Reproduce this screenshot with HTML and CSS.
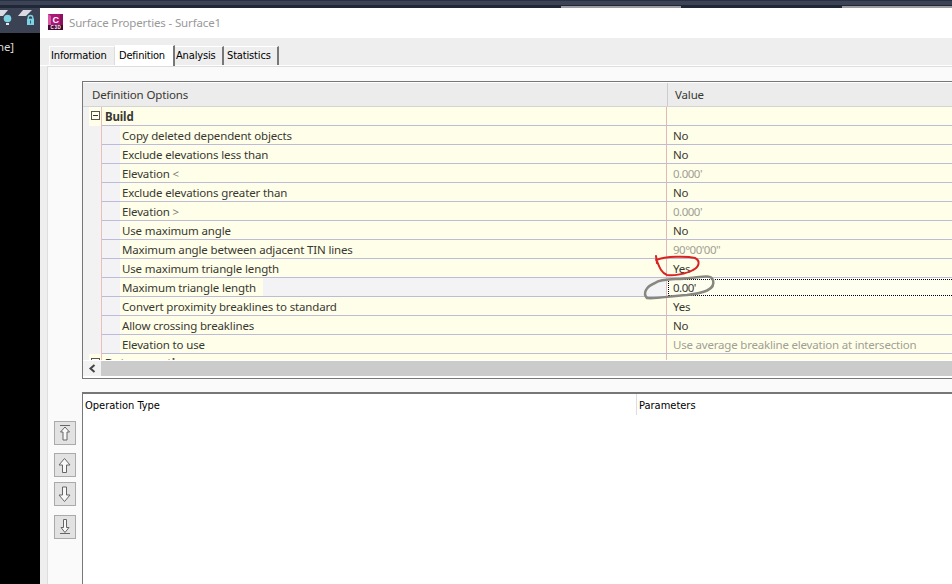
FILE: index.html
```html
<!DOCTYPE html>
<html lang="en">
<head>
    <meta charset="UTF-8">
    <meta name="viewport" content="width=device-width, initial-scale=1.0">
    <title>Surface Properties - Surface1</title>
    <link rel="stylesheet" href="styles.css">
</head>
<body>
    <div class="app-bar">
        <span class="bar-light first"></span>
        <span class="bar-light last"></span>
    </div>
    <div class="workspace">
        <div class="canvas">
            <svg class="layer-icons" width="40" height="25" viewBox="0 8 40 25">
                <path d="M0 10h8l-5 6h-3z" fill="#d9dbe2"/>
                <circle cx="7.5" cy="18.5" r="3.8" fill="#7bd3e4"/>
                <path d="M6 23h3v2h-3z" fill="#e4e7ea"/>
                <path d="M23 10h9l-6 6h-8z" fill="#d9dbe2"/>
                <path d="M28.2 19v-1.2a2.3 2.3 0 0 1 4.6 0V19" fill="none" stroke="#7bd3e4" stroke-width="1.4"/>
                <rect x="27" y="18.7" width="7" height="6.3" fill="#7bd3e4"/>
                <path d="M30 20.5h1v3h-1z" fill="#32616d"/>
            </svg>
            <div class="view-label">ne]</div>
        </div>
        <div class="dialog">
            <div class="title-bar">
                <svg class="logo" width="15" height="16" viewBox="0 0 15 16">
                    <path d="M0 0h15v16h-15z" fill="#ad1677"/>
                    <path d="M0 0l3 2v9l-3 2z" fill="#d659a4"/>
                    <path d="M12 0h3v11h-3z" fill="#8b105e"/>
                    <path d="M0 11h15v5h-15z" fill="#45072f"/>
                    <text x="7.6" y="9" class="logo-letter">C</text>
                    <text x="7.6" y="15.2" class="logo-name" textLength="10">C3D</text>
                </svg>
                <span class="title">Surface Properties - Surface1</span>
            </div>
            <div class="tabs">
                <div class="tab info">Information</div>
                <div class="tab active">Definition</div>
                <div class="tab analysis">Analysis</div>
                <div class="tab stats">Statistics</div>
            </div>
            <div class="page">
                <div class="side-buttons">
                    <button class="move top"><svg width="20" height="22"><path d="M5 3.5h10M10 5l4.500 5h-2.500v8h-4v-8h-2.500z"/></svg></button>
                    <button class="move up"><svg width="20" height="22"><path d="M9.500 4.500l5.500 6.500h-3.500v7.500h-4v-7.500h-3.500z"/></svg></button>
                    <button class="move down"><svg width="20" height="22"><path d="M9.500 18.500l5.500-6.500h-3.500v-8h-4v8h-3.500z"/></svg></button>
                    <button class="move bottom"><svg width="20" height="22"><path d="M5 17.500h10M10 16.500l4-5h-2.500v-8h-3v8h-2.500z"/></svg></button>
                </div>
                <div class="panels">
                    <div class="options">
                        <div class="options-head">
                            <div class="head-name">Definition Options</div>
                            <div class="head-value">Value</div>
                        </div>
                        <div class="rows">
                            <div class="row group">
                                <div class="toggle"><span class="box"></span></div>
                                <div class="name"><span>Build</span></div>
                                <div class="value"></div>
                            </div>
                            <div class="row">
                                <div class="toggle"></div>
                                <div class="name"><span>Copy deleted dependent objects</span></div>
                                <div class="value">No</div>
                            </div>
                            <div class="row">
                                <div class="toggle"></div>
                                <div class="name"><span>Exclude elevations less than</span></div>
                                <div class="value">No</div>
                            </div>
                            <div class="row">
                                <div class="toggle"></div>
                                <div class="name"><span>Elevation <i>&lt;</i></span></div>
                                <div class="value muted number">0.000'</div>
                            </div>
                            <div class="row">
                                <div class="toggle"></div>
                                <div class="name"><span>Exclude elevations greater than</span></div>
                                <div class="value">No</div>
                            </div>
                            <div class="row">
                                <div class="toggle"></div>
                                <div class="name"><span>Elevation <i>&gt;</i></span></div>
                                <div class="value muted number">0.000'</div>
                            </div>
                            <div class="row">
                                <div class="toggle"></div>
                                <div class="name"><span>Use maximum angle</span></div>
                                <div class="value">No</div>
                            </div>
                            <div class="row">
                                <div class="toggle"></div>
                                <div class="name"><span>Maximum angle between adjacent TIN lines</span></div>
                                <div class="value muted number">90°00'00"</div>
                            </div>
                            <div class="row">
                                <div class="toggle"></div>
                                <div class="name"><span>Use maximum triangle length</span></div>
                                <div class="value">Yes</div>
                            </div>
                            <div class="row selected">
                                <div class="toggle"></div>
                                <div class="name"><span>Maximum triangle length</span></div>
                                <div class="value number">0.00'</div>
                            </div>
                            <div class="row">
                                <div class="toggle"></div>
                                <div class="name"><span>Convert proximity breaklines to standard</span></div>
                                <div class="value">Yes</div>
                            </div>
                            <div class="row">
                                <div class="toggle"></div>
                                <div class="name"><span>Allow crossing breaklines</span></div>
                                <div class="value">No</div>
                            </div>
                            <div class="row">
                                <div class="toggle"></div>
                                <div class="name"><span>Elevation to use</span></div>
                                <div class="value muted">Use average breakline elevation at intersection</div>
                            </div>
                            <div class="row group">
                                <div class="toggle"><span class="box"></span></div>
                                <div class="name"><span>Data operations</span></div>
                                <div class="value"></div>
                            </div>
                        </div>
                        <div class="scrollbar">
                            <svg width="18" height="15"><path d="M11.500 4l-4 3.500 4 3.500" fill="none" stroke="#444" stroke-width="2"/></svg>
                            <div class="thumb"></div>
                        </div>
                    </div>
                    <div class="operations">
                        <div class="op-type">Operation Type</div>
                        <div class="op-params">Parameters</div>
                    </div>
                </div>
            </div>
        </div>
    </div>
    <svg class="marks" width="952" height="584">
        <path class="red" d="M656 256L657 263M656 260C666 256 687 256 695 258C701 261 699 267 693 270C686 274 673 276 667 275C661 273 659 266 656.500 260"/>
        <path class="gray" d="M655 283C662 278 676 280 690 278C701 277 711 274 713 280C716 290 703 293 687 295C669 296 657 299 647 298C643 294 645 287 655 283Z"/>
    </svg>
</body>
</html>
```
FILE: styles.css
```css
* {
    box-sizing: border-box;
}
body {
    margin: 0;
    width: 952px;
    height: 584px;
    overflow: hidden;
    position: relative;
    background: #000;
    font-family: "Noto Sans", sans-serif;
    font-size: 11.5px;
    letter-spacing: -0.15px;
    color: #383832;
}
.app-bar {
    display: flex;
    align-items: flex-end;
    height: 8px;
    padding-left: 561px;
    gap: 161px;
    background: linear-gradient(#273044 1px, #3c4354 1px, #3c4354 5px, #202838 5px);
}
.bar-light {
    height: 2px;
    background: #9b9da3;
}
.bar-light.first {
    width: 120px;
}
.bar-light.last {
    flex: 1;
}
.workspace {
    display: flex;
    height: 576px;
}
.canvas {
    width: 40px;
    flex: none;
    overflow: hidden;
}
.layer-icons {
    display: block;
    background: #3a4254;
}
.view-label {
    padding-top: 7px;
    line-height: 14px;
    color: #d8d8d8;
    margin-left: -3px;
}
.dialog {
    flex: 1;
    display: flex;
    flex-direction: column;
    min-width: 0;
    background: #eee;
}
.title-bar {
    display: flex;
    align-items: center;
    height: 30px;
    flex: none;
    padding-left: 8px;
    gap: 6px;
    background: #fff;
}
.logo {
    margin-top: -2px;
}
.logo-letter, .logo-name {
    font-family: "Liberation Sans", sans-serif;
    font-weight: bold;
    fill: #fff;
    text-anchor: middle;
}
.logo-letter {
    font-size: 9px;
}
.logo-name {
    font-size: 4.5px;
}
.title {
    line-height: 30px;
    color: #999;
}
.tabs {
    display: flex;
    align-items: flex-end;
    height: 28px;
    flex: none;
    padding-left: 9px;
    border-bottom: 1px solid #fff;
}
.tab {
    height: 19px;
    padding-left: 1px;
    border-top: 1px solid #fff;
    border-right: 2px solid #777;
    font-family: "DejaVu Sans Condensed", "DejaVu Sans", sans-serif;
    font-size: 11px;
    line-height: 17px;
    white-space: nowrap;
    color: #000;
}
.tab.info {
    width: 66px;
    border-left: 1px solid #fff;
    border-right: 1px solid #ddd;
}
.tab.active {
    width: 60px;
    height: 21px;
    margin-bottom: -1px;
    padding-left: 4px;
    line-height: 19px;
    letter-spacing: -0.2px;
    background: #fff;
}
.tab.analysis {
    width: 49px;
}
.tab.stats {
    width: 55px;
    padding-left: 3px;
}
.page {
    flex: 1;
    display: flex;
    margin-left: 7px;
    border-top: 1px solid #ddd;
    border-left: 1px solid #ddd;
    background: #fafafa;
}
.side-buttons {
    width: 34px;
    flex: none;
    padding: 354px 0 0 6px;
}
.move {
    display: block;
    width: 22px;
    height: 24px;
    padding: 0;
    border: 1px solid #aaa;
    background: #e2e2e2;
}
.move svg {
    display: block;
}
.move path {
    fill: #f8f8f8;
    stroke: #666;
    stroke-width: 1;
}
.move.up {
    margin-top: 8px;
}
.move.down {
    margin-top: 5px;
}
.move.bottom {
    margin-top: 9px;
}
.panels {
    flex: 1;
    min-width: 0;
    display: flex;
    flex-direction: column;
    gap: 13px;
    padding-top: 14px;
}
.options {
    height: 298px;
    flex: none;
    border: 1px solid #777;
    border-right: none;
    background: #fff;
}
.options-head {
    display: flex;
    height: 24px;
    margin-top: 1px;
    line-height: 24px;
    background: #ececec;
    border-bottom: 1px solid #d4d4d4;
}
.head-name {
    width: 585px;
    padding-left: 9px;
    border-right: 1px solid #ccc;
}
.head-value {
    padding-left: 7px;
}
.rows {
    height: 254px;
    overflow: hidden;
    border-bottom: 1px solid #fff;
}
.row {
    display: flex;
    height: 19px;
    line-height: 19px;
    white-space: nowrap;
}
.toggle {
    width: 19px;
    flex: none;
    padding: 4px 0 0 8px;
    background: #f2f2f2;
    border-right: 1px solid #efbcbc;
}
.group .toggle {
    background: linear-gradient(90deg, #f2f2f2 6px, #ffffe9 6px);
}
.box {
    display: flex;
    align-items: center;
    justify-content: center;
    width: 9px;
    height: 9px;
    border: 1px solid #555;
    background: #ffffe9;
}
.box::before {
    content: "";
    width: 5px;
    height: 1px;
    background: #333;
}
.name {
    width: 565px;
    flex: none;
    padding-left: 18px;
    background: linear-gradient(90deg, #f3f3f5 18px, #ffffe9 18px);
    border-right: 1px solid #dfb9b9;
    border-bottom: 1px solid #bcbcd9;
}
.name span {
    display: inline-block;
    height: 18px;
    padding: 0 7px 0 2px;
}
.name i {
    font-style: normal;
    color: #777;
}
.group .name {
    padding-left: 1px;
    background: #ffffe9;
    font-weight: bold;
}
.value {
    flex: 1;
    padding-left: 6px;
    background: #ffffe9;
    border-bottom: 1px solid #bcbcd9;
}
.value.muted {
    color: #a0a094;
    letter-spacing: -0.2px;
}
.value.number {
    letter-spacing: -0.5px;
}
.selected .name {
    background: #f3f3f5;
}
.selected .name span {
    background: #ffffe9;
}
.selected .value {
    margin-left: 1px;
    padding-left: 4px;
    border: 1px dotted #000;
    border-right: none;
    height: 17px;
    margin-top: 1px;
    line-height: 15px;
    background: #fffff0;
}
.scrollbar {
    display: flex;
    height: 15px;
    background: #f2f2f2;
}
.thumb {
    flex: 1;
    background: #cbcbcb;
}
.operations {
    flex: 1;
    display: flex;
    border-top: 2px solid #777;
    border-left: 1px solid #777;
    background: #fff;
    font-family: "DejaVu Sans Condensed", "DejaVu Sans", sans-serif;
    font-size: 11px;
    letter-spacing: 0;
    line-height: 23px;
    color: #000;
}
.op-type {
    width: 554px;
    height: 21px;
    padding-left: 2px;
    border-right: 1px solid #ddd;
}
.op-params {
    padding-left: 2px;
}
.marks {
    position: absolute;
    top: 0;
    left: 0;
    pointer-events: none;
}
.marks path {
    fill: none;
    stroke-width: 2;
    stroke-linecap: round;
}
.marks .red {
    stroke: #d92323;
}
.marks .gray {
    stroke: #878780;
    stroke-width: 2.5;
}
```
